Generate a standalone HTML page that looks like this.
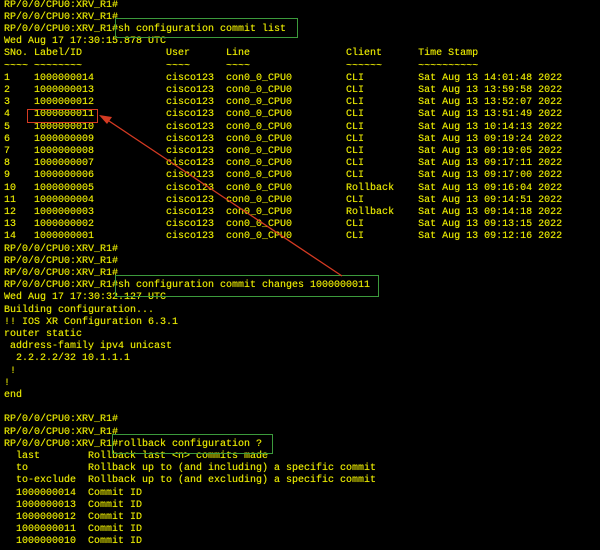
<!DOCTYPE html>
<html><head><meta charset="utf-8"><style>
html,body{margin:0;padding:0;background:#000;width:600px;height:550px;overflow:hidden;position:relative}
pre{margin:0;position:absolute;left:4px;top:-0.5px;font-family:"Liberation Mono",monospace;font-size:10px;line-height:12.21px;color:#e4e400;text-shadow:0 0 0.4px #e4e400}
.b{position:absolute;border:1.5px solid #3c9a3c;box-sizing:border-box}
.r{position:absolute;border:1.5px solid #d43a22;box-sizing:border-box}
svg{position:absolute;left:0;top:0}
</style></head><body>
<pre>RP/0/0/CPU0:XRV_R1#
RP/0/0/CPU0:XRV_R1#
RP/0/0/CPU0:XRV_R1#sh configuration commit list
Wed Aug 17 17:30:15.878 UTC
SNo. Label/ID              User      Line                Client      Time Stamp
~~~~ ~~~~~~~~              ~~~~      ~~~~                ~~~~~~      ~~~~~~~~~~
1    1000000014            cisco123  con0_0_CPU0         CLI         Sat Aug 13 14:01:48 2022
2    1000000013            cisco123  con0_0_CPU0         CLI         Sat Aug 13 13:59:58 2022
3    1000000012            cisco123  con0_0_CPU0         CLI         Sat Aug 13 13:52:07 2022
4    1000000011            cisco123  con0_0_CPU0         CLI         Sat Aug 13 13:51:49 2022
5    1000000010            cisco123  con0_0_CPU0         CLI         Sat Aug 13 10:14:13 2022
6    1000000009            cisco123  con0_0_CPU0         CLI         Sat Aug 13 09:19:24 2022
7    1000000008            cisco123  con0_0_CPU0         CLI         Sat Aug 13 09:19:05 2022
8    1000000007            cisco123  con0_0_CPU0         CLI         Sat Aug 13 09:17:11 2022
9    1000000006            cisco123  con0_0_CPU0         CLI         Sat Aug 13 09:17:00 2022
10   1000000005            cisco123  con0_0_CPU0         Rollback    Sat Aug 13 09:16:04 2022
11   1000000004            cisco123  con0_0_CPU0         CLI         Sat Aug 13 09:14:51 2022
12   1000000003            cisco123  con0_0_CPU0         Rollback    Sat Aug 13 09:14:18 2022
13   1000000002            cisco123  con0_0_CPU0         CLI         Sat Aug 13 09:13:15 2022
14   1000000001            cisco123  con0_0_CPU0         CLI         Sat Aug 13 09:12:16 2022
RP/0/0/CPU0:XRV_R1#
RP/0/0/CPU0:XRV_R1#
RP/0/0/CPU0:XRV_R1#
RP/0/0/CPU0:XRV_R1#sh configuration commit changes 1000000011
Wed Aug 17 17:30:32.127 UTC
Building configuration...
!! IOS XR Configuration 6.3.1
router static
 address-family ipv4 unicast
  2.2.2.2/32 10.1.1.1
 !
!
end

RP/0/0/CPU0:XRV_R1#
RP/0/0/CPU0:XRV_R1#
RP/0/0/CPU0:XRV_R1#rollback configuration ?
  last        Rollback last &lt;n&gt; commits made
  to          Rollback up to (and including) a specific commit
  to-exclude  Rollback up to (and excluding) a specific commit
  1000000014  Commit ID
  1000000013  Commit ID
  1000000012  Commit ID
  1000000011  Commit ID
  1000000010  Commit ID</pre>
<div class="b" style="left:115px;top:18px;width:183px;height:20px"></div>
<div class="r" style="left:27px;top:109px;width:71px;height:14px"></div>
<div class="b" style="left:115px;top:275px;width:264px;height:22px"></div>
<div class="b" style="left:112px;top:434px;width:161px;height:20px"></div>
<svg width="600" height="550"><line x1="342" y1="276" x2="106" y2="119" stroke="#d43a22" stroke-width="1.3"/><polygon points="99,115 112,117 107,124" fill="#d43a22"/></svg>
</body></html>
